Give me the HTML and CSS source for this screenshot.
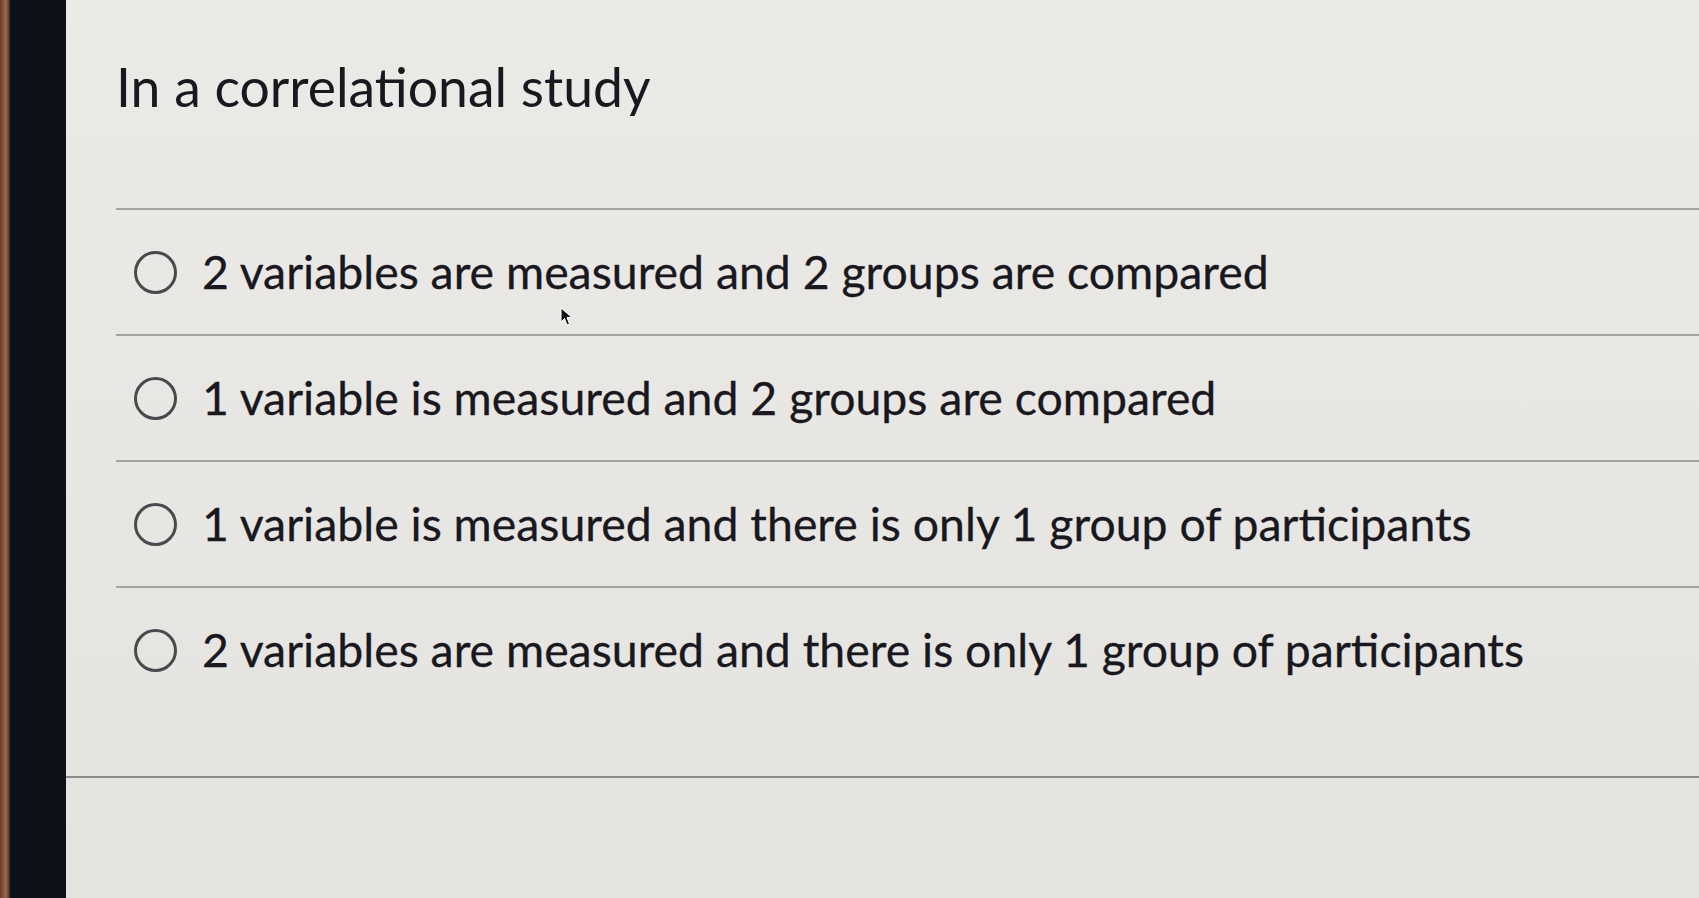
FILE: index.html
```html
<!DOCTYPE html>
<html lang="en">
<head>
<meta charset="utf-8">
<title>In a correlational study</title>
<link rel="stylesheet" href="styles.css">
</head>
<body>
<div class="screen">
  <div class="bezel"><div class="bezel-edge"></div><div class="bezel-dark"></div></div>
  <main class="main">
    <section class="question">
      <h1 class="prompt">In a correlational study</h1>
      <ul class="options">
        <li class="option"><span class="radio"></span><span class="label">2 variables are measured and 2 groups are compared</span></li>
        <li class="option"><span class="radio"></span><span class="label">1 variable is measured and 2 groups are compared</span></li>
        <li class="option"><span class="radio"></span><span class="label">1 variable is measured and there is only 1 group of participants</span></li>
        <li class="option"><span class="radio"></span><span class="label">2 variables are measured and there is only 1 group of participants</span></li>
      </ul>
    </section>
    <div class="next"></div>
    <svg class="cursor" width="14" height="20" viewBox="0 0 14 20"><path d="M1 1 L1 15 L4.5 11.5 L7 18 L9.5 17 L7 10.5 L12 10.5 Z" fill="#111" stroke="#fff" stroke-width="1"/></svg>
  </main>
</div>
</body>
</html>
```

FILE: styles.css
```css
html, body {
  margin: 0;
  padding: 0;
  height: 100%;
  background: #e6e5e2;
}
.screen {
  display: flex;
  height: 898px;
  overflow: hidden;
  font-family: "Lato", "Open Sans", sans-serif;
  color: #18181e;
}
.bezel {
  display: flex;
  flex: 0 0 66px;
}
.bezel-edge {
  width: 10px;
  background: linear-gradient(90deg, #6b3b25, #9a6a50 60%, #3a2a22);
}
.bezel-dark {
  flex: 1;
  background: #0d121a;
}
.main {
  flex: 1;
  position: relative;
  background: linear-gradient(180deg, #ebeae7 0%, #e7e6e3 60%, #e4e3e0 100%);
}
.question {
  padding: 54px 0 0 50px;
  height: 778px;
  box-sizing: border-box;
  border-bottom: 2px solid #8d8d8d;
}
.prompt {
  margin: 0 0 90px 0;
  font-weight: 400;
  font-size: 53.5px;
  line-height: 64px;
}
.options {
  list-style: none;
  margin: 0;
  padding: 0;
}
.option {
  display: flex;
  align-items: center;
  height: 124px;
  border-top: 2px solid #a3a3a3;
  padding-left: 18px;
}
.radio {
  flex: 0 0 auto;
  width: 37px;
  height: 37px;
  border: 3px solid #4a4a4e;
  border-radius: 50%;
  margin-right: 25px;
}
.label {
  font-size: 46.4px;
  line-height: 54px;
  padding-bottom: 3px;
  -webkit-text-stroke: 0.3px #18181e;
}
.cursor {
  position: absolute;
  left: 494px;
  top: 307px;
}
```
